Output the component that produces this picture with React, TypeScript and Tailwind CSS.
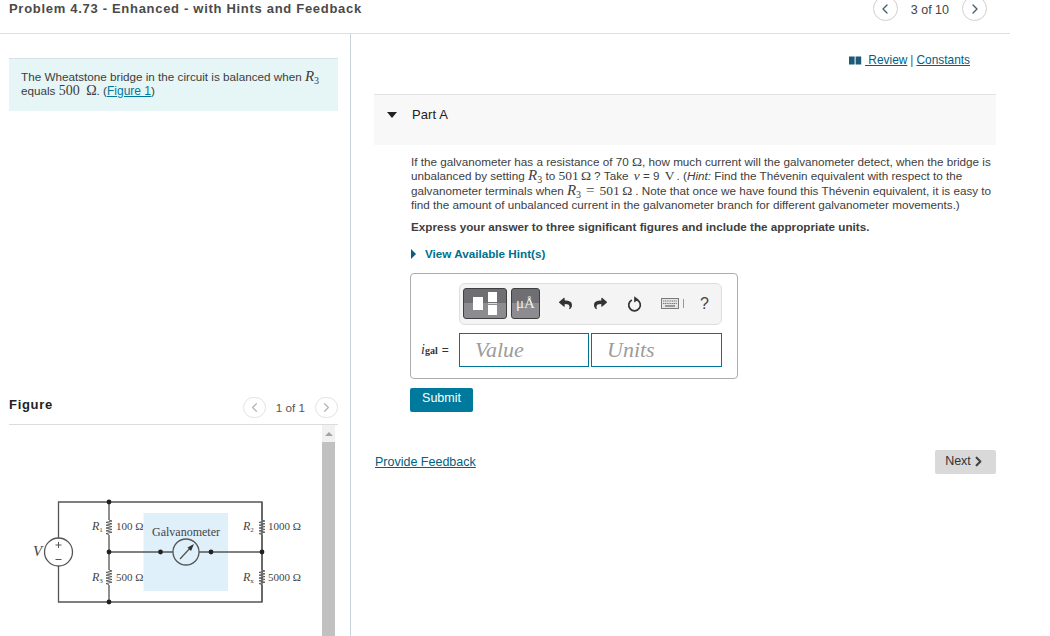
import { ChevronLeft, ChevronRight } from "lucide-react";
import { FaReply, FaShare } from "react-icons/fa";
import type { ReactNode } from "react";

function PagerButton({ dir, muted }: { dir: "left" | "right"; muted?: boolean }) {
  const Icon = dir === "left" ? ChevronLeft : ChevronRight;
  return (
    <span
      className={
        muted
          ? "flex h-[21px] w-[23px] items-center justify-center rounded-full border border-[#e2e2e2] text-[#b5b5b5]"
          : "flex h-[25px] w-[25px] items-center justify-center rounded-full border border-[#cfcfcf] text-[#44606e]"
      }
    >
      <Icon size={muted ? 15 : 16} strokeWidth={2} />
    </span>
  );
}

function M({ children }: { children: ReactNode }) {
  return (
    <span className="font-['Liberation_Serif',serif] text-[13.5px] leading-[10px] [word-spacing:-1px]">{children}</span>
  );
}

function R3() {
  return (
    <span className="font-['Liberation_Serif',serif] text-[15px] italic leading-[10px]">
      R<span className="relative top-[3px] text-[10px] not-italic leading-[8px]">3</span>
    </span>
  );
}

function Circuit() {
  const serif = "'Liberation Serif', serif";
  const zig = (x: number, y: number) =>
    `M${x} ${y} l3 1 l-6 1.4 l6 1.4 l-6 1.4 l6 1.4 l-6 1.4 l6 1.4 l-6 1.4 l6 1.4 l-6 1.4 l3 1`;
  return (
    <svg width="313" height="211" viewBox="9 425 313 211" className="block">
      <rect x="143.5" y="513" width="84.5" height="78" fill="#dff0fb" />
      <g fill="none" stroke="#555" strokeWidth="1.3">
        <path d="M58.5 538V502H262V602H58.5V566" />
        <path d="M109 502V520M109 535V570M109 585V602" />
        <path d="M109 552H173M199 552H262" />
        <path d="M262 502V520M262 535V570M262 585V602" />
        <circle cx="58.5" cy="552" r="14" />
        <circle cx="186" cy="552" r="13" />
        <path d={zig(109, 520)} strokeWidth="0.9" />
        <path d={zig(109, 570)} strokeWidth="0.9" />
        <path d={zig(262, 520)} strokeWidth="0.9" />
        <path d={zig(262, 570)} strokeWidth="0.9" />
        <path d="M180 559L192 546" />
      </g>
      <path d="M194 544L187.5 547.5L191 551Z" fill="#333" />
      <g fill="#222">
        <circle cx="109" cy="502" r="2.4" />
        <circle cx="109" cy="552" r="2.4" />
        <circle cx="109" cy="602" r="2.4" />
        <circle cx="262" cy="552" r="2.4" />
        <circle cx="160.5" cy="552" r="2.4" />
        <circle cx="211" cy="552" r="2.4" />
      </g>
      <g stroke="#555" strokeWidth="1" fill="none">
        <path d="M55.5 545H61.5M58.5 542V548" />
        <path d="M55.5 559.5H61.5" />
      </g>
      <g fontFamily={serif} fill="#444" fontSize="11">
        <text x="33" y="556" fontSize="15" fontStyle="italic">V</text>
        <text x="92" y="530" fontSize="12" fontStyle="italic">R<tspan fontSize="7" dy="2" fontStyle="normal">1</tspan></text>
        <text x="116" y="530">100 Ω</text>
        <text x="92" y="581" fontSize="12" fontStyle="italic">R<tspan fontSize="7" dy="2" fontStyle="normal">3</tspan></text>
        <text x="116" y="581">500 Ω</text>
        <text x="243" y="530" fontSize="12" fontStyle="italic">R<tspan fontSize="7" dy="2" fontStyle="normal">2</tspan></text>
        <text x="268" y="530">1000 Ω</text>
        <text x="243" y="581" fontSize="12" fontStyle="italic">R<tspan fontSize="7" dy="2" fontStyle="normal">x</tspan></text>
        <text x="268" y="581">5000 Ω</text>
        <text x="152" y="536" fontSize="12">Galvanometer</text>
      </g>
    </svg>
  );
}

export default function App() {
  return (
    <div className="h-[636px] w-[1050px] overflow-hidden bg-white font-['Liberation_Sans',Arial,sans-serif] text-[11.7px] text-[#333]">
      {/* Top bar */}
      <div className="flex h-[34px] w-[1010px] items-start justify-between border-b border-[#dfdfdf] pl-[9px] pr-[23px]">
        <h1 className="mt-[1px] text-[13px] font-bold leading-[16px] tracking-[0.7px] text-[#4a4a4a]">
          Problem 4.73 - Enhanced - with Hints and Feedback
        </h1>
        <div className="flex -translate-y-[4px] items-center gap-[13px] text-[12.5px] text-[#444]">
          <PagerButton dir="left" />
          <span className="mt-[3px]">3 of 10</span>
          <PagerButton dir="right" />
        </div>
      </div>

      <div className="flex h-[602px]">
        {/* Left pane */}
        <div className="flex h-full w-[351px] shrink-0 flex-col border-r border-[#c6d2dc] pl-[9px] pr-[12px] pt-[24px]">
          <div className="h-[53px] border-t border-[#d8e2e6] bg-[#e6f5f6] pl-[12px] pt-[10px] leading-[15px] text-[#3d3d3d]">
            <p className="whitespace-nowrap">
              The Wheatstone bridge in the circuit is balanced when <R3 />
            </p>
            <p className="-mt-[1px] whitespace-nowrap">
              equals{" "}
              <span className="font-['Liberation_Serif',serif] text-[14px] leading-[10px] [word-spacing:3px]">500 Ω</span>. (
              <a className="text-[12px] text-[#007a9c] underline">Figure 1</a>)
            </p>
          </div>

          <div className="mt-[283px] flex h-[31px] items-center justify-between border-b border-[#dcdcdc] pb-[3px]">
            <span className="mb-[6px] text-[13px] font-bold tracking-[0.7px] text-[#222]">Figure</span>
            <div className="flex items-center gap-[10px] text-[#555]">
              <PagerButton dir="left" muted />
              <span>1 of 1</span>
              <PagerButton dir="right" muted />
            </div>
          </div>

          <div className="flex min-h-0 flex-1">
            <Circuit />
            <div className="flex w-[13px] flex-col bg-[#f1f1f1]">
              <div className="flex h-[17px] items-center justify-center">
                <span className="h-0 w-0 border-x-[4px] border-b-[4px] border-x-transparent border-b-[#a3a3a3]" />
              </div>
              <div className="flex-1 bg-[#c1c1c1]" />
            </div>
          </div>
        </div>

        {/* Right pane */}
        <div className="w-[645px] pl-[23px] pr-0">
          <div className="flex h-[60px] items-start justify-end pr-[26px] pt-[19px] text-[11.9px] leading-[14px] text-[#00607f]">
            <svg width="13" height="9" viewBox="0 0 13 9" className="mr-[3px] mt-[3px]">
              <rect x="0" y="0.5" width="5.6" height="8" fill="#1c5a78" />
              <rect x="6.6" y="0.5" width="5.6" height="8" fill="#1c5a78" />
            </svg>
            <a className="underline">&nbsp;Review</a>
            <span className="mx-[3px] text-[#555]">|</span>
            <a className="underline">Constants</a>
          </div>

          <div className="flex h-[51px] items-start border-t border-[#e3e3e3] bg-[#f8f8f8] pl-[13px] pt-[12px]">
            <span className="mt-[5px] h-0 w-0 border-x-[5px] border-t-[6px] border-x-transparent border-t-[#222]" />
            <span className="ml-[15px] text-[13px] font-medium leading-[16px] tracking-[0.1px] text-[#222]">Part A</span>
          </div>

          <div className="pl-[36px]">
            <p className="ml-[1px] mt-[10px] w-[600px] whitespace-nowrap leading-[14.4px] text-[#404040]">
              If the galvanometer has a resistance of 70 <M>Ω</M>, how much current will the galvanometer detect, when the bridge is
              <br />
              unbalanced by setting <R3 /> to <M>501 Ω</M><span className="ml-[3px]">?</span> Take <span className="ml-[2px]"><M><i>v</i></M></span> = 9 <span className="ml-[2px] mr-[2px]"><M>V</M></span>. (<i>Hint:</i> Find the Thévenin equivalent with respect to the
              <br />
              galvanometer terminals when <R3 />
              <span className="mx-[5px] font-['Liberation_Serif',serif] text-[15px] leading-[10px]">=</span>
              <M>501 Ω</M><span className="ml-[3px]">.</span> Note that once we have found this Thévenin equivalent, it is easy to
              <br />
              find the amount of unbalanced current in the galvanometer branch for different galvanometer movements.)
            </p>
            <p className="ml-[1px] mt-[7px] font-bold leading-[14px] text-[#404040]">
              Express your answer to three significant figures and include the appropriate units.
            </p>
            <div className="ml-[1px] mt-[13px] flex items-center font-bold leading-[14px] text-[#00708f]">
              <span className="h-0 w-0 border-y-[5px] border-l-[5px] border-y-transparent border-l-[#0b5d7a]" />
              <span className="ml-[9px]">View Available Hint(s)</span>
            </div>

            {/* Answer box */}
            <div className="mt-[12px] flex h-[106px] w-[328px] flex-col rounded-[4px] border border-[#adadad] pl-[48px] pt-[9px]">
              <div className="flex h-[42px] w-[263px] items-center rounded-[6px] border border-[#dedede] bg-[#f4f4f4] pl-[3px] text-[#333]">
                <div className="flex h-[31px] w-[44px] items-center justify-center gap-[5px] rounded-[3px] border border-[#3f3f3f] bg-[linear-gradient(#6f6f73_50%,#8b8b90_50%)]">
                  <span className="h-[13px] w-[10px] bg-white" />
                  <span className="flex flex-col gap-[1px]">
                    <span className="h-[10px] w-[9px] bg-white" />
                    <span className="h-[1px] w-[9px] bg-[#ddd]" />
                    <span className="h-[10px] w-[9px] bg-white" />
                  </span>
                </div>
                <div className="ml-[4px] flex h-[31px] w-[29px] items-center justify-center rounded-[3px] border border-[#3f3f3f] bg-[linear-gradient(#6f6f73_50%,#8b8b90_50%)] font-['Liberation_Serif',serif] text-[15px] text-[#f0f0f0]">
                  μÅ
                </div>
                <FaReply size={13} className="ml-[19px]" />
                <FaShare size={13} className="ml-[22px]" />
                <svg width="15" height="17" viewBox="0 0 15 17" className="ml-[20px]">
                  <path d="M9.6 4.6 A5.8 5.8 0 1 1 4.8 4.9" fill="none" stroke="#333" strokeWidth="1.7" />
                  <path d="M7.2 1.2 L11.6 4.6 L7.2 7.4Z" fill="#333" />
                </svg>
                <svg width="18" height="11" viewBox="0 0 18 11" className="ml-[19px]">
                  <rect x="0.5" y="0.5" width="17" height="10" fill="#e6e6e6" stroke="#7a7a7a" />
                  <path d="M2 3H16M2 5.5H16" stroke="#777" strokeWidth="1.2" strokeDasharray="1.2 .6" />
                  <path d="M4 8H14" stroke="#777" strokeWidth="1.4" />
                </svg>
                <span className="ml-[4px] h-[9px] w-px bg-[#999]" />
                <span className="ml-[16px] text-[16px] leading-none text-[#444]">?</span>
              </div>

              <div className="-ml-[38px] mt-[8px] flex items-center">
                <span className="w-[38px] whitespace-nowrap text-[#333]">
                  <span className="font-['Liberation_Serif',serif] text-[14px] font-medium italic">i</span>
                  <span className="font-['Liberation_Serif',serif] text-[10px] font-bold">gal</span>
                  <span className="ml-[4px] text-[12px]">=</span>
                </span>
                <div className="flex h-[34px] w-[130px] items-center border border-[#00759a] pl-[15px] font-['Liberation_Serif',serif] text-[22px] italic text-[#9c9c9c]">
                  Value
                </div>
                <div className="ml-[2px] flex h-[34px] w-[131px] items-center border border-[#00759a] pl-[15px] font-['Liberation_Serif',serif] text-[22px] italic text-[#9c9c9c]">
                  Units
                </div>
              </div>
            </div>

            <button className="mt-[9px] block h-[24px] w-[63px] rounded-[2px] bg-[#007a9c] pb-[3px] text-center text-[12.5px] font-medium leading-[20px] text-white">
              Submit
            </button>
          </div>

          <div className="mt-[38px] flex w-[622px] items-center justify-between">
            <a className="ml-[1px] mt-[2px] text-[12.5px] text-[#00607f] underline">Provide Feedback</a>
            <span className="flex h-[24px] w-[61px] items-center justify-center rounded-[2px] bg-[#d9d9d9] text-[12.5px] text-[#333]">
              Next
              <ChevronRight size={15} strokeWidth={3.5} className="text-[#444]" />
            </span>
          </div>
        </div>
      </div>
    </div>
  );
}
